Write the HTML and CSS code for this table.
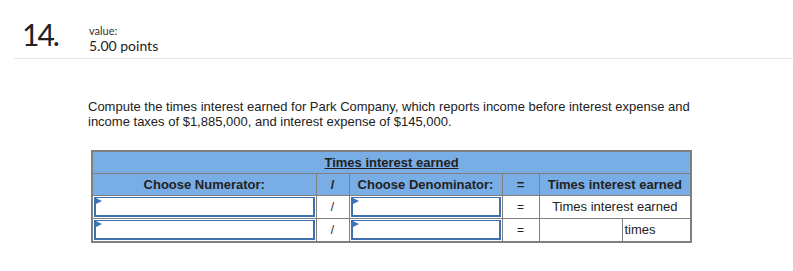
FILE: index.html
```html
<!DOCTYPE html>
<html>
<head>
<meta charset="utf-8">
<link rel="stylesheet" href="styles.css">
</head>
<body>
<div class="qhead">
  <div class="qnum">14.</div>
  <div class="qval">
    <div class="vlabel">value:</div>
    <div class="vpoints">5.00 points</div>
  </div>
</div>
<div class="rule"></div>
<div class="qbody">
  <p class="prompt">Compute the times interest earned for Park Company, which reports income before interest expense and income taxes of $1,885,000, and interest expense of $145,000.</p>
  <table class="calc">
    <colgroup>
      <col class="c-num"><col class="c-op"><col class="c-den"><col class="c-eq"><col class="c-res1"><col class="c-res2">
    </colgroup>
    <tr class="hd">
      <th colspan="6"><u>Times interest earned</u></th>
    </tr>
    <tr class="hd">
      <th>Choose Numerator:</th>
      <th>/</th>
      <th>Choose Denominator:</th>
      <th>=</th>
      <th colspan="2">Times interest earned</th>
    </tr>
    <tr>
      <td class="in"><div class="box"></div></td>
      <td class="op">/</td>
      <td class="in"><div class="box"></div></td>
      <td class="op">=</td>
      <td colspan="2" class="res">Times interest earned</td>
    </tr>
    <tr class="last">
      <td class="in"><div class="box"></div></td>
      <td class="op">/</td>
      <td class="in"><div class="box"></div></td>
      <td class="op">=</td>
      <td class="res"></td>
      <td class="unit">times</td>
    </tr>
  </table>
</div>
</body>
</html>
```
FILE: styles.css
```css
html, body {
  margin: 0;
  padding: 0;
  background: #fff;
}
body {
  width: 793px;
  height: 271px;
  overflow: hidden;
  font-family: "Liberation Sans", Arial, sans-serif;
  color: #222;
}
.qhead {
  display: flex;
  padding: 17px 0 0 22px;
  height: 40px;
  box-sizing: border-box;
}
.qnum {
  font-family: Lato, "Open Sans", sans-serif;
  font-size: 30px;
  line-height: 34px;
  color: #222;
  width: 67px;
  letter-spacing: -2px;
}
.qval {
  font-family: Lato, "Open Sans", sans-serif;
  padding-top: 8px;
}
.vlabel {
  font-size: 11px;
  line-height: 11px;
  color: #333;
}
.vpoints {
  font-size: 14px;
  line-height: 16px;
  color: #222;
  margin-top: 2px;
}
.rule {
  margin: 18px 0 0 14px;
  height: 1px;
  background: #e6e6e6;
}
.qbody {
  padding: 0 0 0 88px;
}
.prompt {
  margin: 40px 0 0 0;
  width: 610px;
  font-size: 13px;
  line-height: 15px;
  color: #222;
}
.calc {
  margin: 21px 0 0 3px;
  border-collapse: collapse;
  border: 2px solid #7f7f7f;
  font-size: 13px;
  table-layout: fixed;
  width: 599px;
}
.c-num { width: 224px; }
.c-op { width: 33px; }
.c-den { width: 153px; }
.c-eq { width: 37px; }
.c-res1 { width: 83px; }
.c-res2 { width: 69px; }
.calc th, .calc td {
  border: 1px solid #7f7f7f;
  height: 22px;
  padding: 0;
  text-align: center;
  vertical-align: middle;
  box-sizing: border-box;
}
.calc .hd th {
  background: #79ade5;
  font-weight: bold;
  color: #222;
}
.calc td.in {
  padding: 1px;
}
.box {
  position: relative;
  height: 20px;
  box-sizing: border-box;
  border: 2px solid #3f6fae;
  border-top-width: 1px;
  background: #fff;
}
.box::before {
  content: "";
  position: absolute;
  left: 0;
  top: 0;
  border-top: 3px solid transparent;
  border-bottom: 3px solid transparent;
  border-left: 6px solid #3f73c0;
}
.calc td.op {
  font-size: 12px;
}
.calc td.unit {
  text-align: left;
  padding-left: 2px;
}
```
